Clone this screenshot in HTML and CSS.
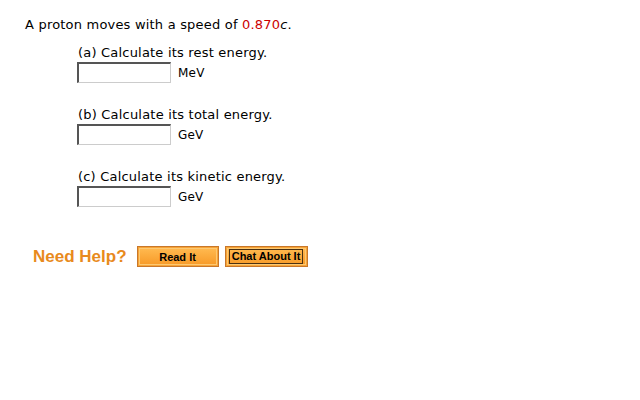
FILE: index.html
```html
<!DOCTYPE html>
<html>
<head>
<meta charset="utf-8">
<link rel="stylesheet" href="styles.css">
</head>
<body>
<div class="page">
  <p class="question">A proton moves with a speed of <span class="val">0.870</span><i>c</i>.</p>
  <div class="parts">
    <div class="part">
      <div class="label">(a) Calculate its rest energy.</div>
      <div class="answer"><span class="box"></span><span class="unit">MeV</span></div>
    </div>
    <div class="part">
      <div class="label">(b) Calculate its total energy.</div>
      <div class="answer"><span class="box"></span><span class="unit">GeV</span></div>
    </div>
    <div class="part">
      <div class="label">(c) Calculate its kinetic energy.</div>
      <div class="answer"><span class="box"></span><span class="unit">GeV</span></div>
    </div>
  </div>
  <div class="help">
    <span class="need">Need Help?</span>
    <span class="btn read"><span class="btn-in">Read It</span></span>
    <span class="btn chat"><span class="btn-in"><span class="focus">Chat About It</span></span></span>
  </div>
</div>
</body>
</html>
```
FILE: styles.css
```css
html, body { margin: 0; padding: 0; background: #fff; }
.page {
  font-family: "DejaVu Sans", Verdana, sans-serif;
  font-size: 13px;
  letter-spacing: 0.2px;
  color: #000;
  padding: 17px 0 0 25px;
}
.question { margin: 0; line-height: 16px; }
.val { color: #cc0000; }
.parts { margin: 12px 0 0 52px; display: flex; flex-direction: column; gap: 24px; }
.label { line-height: 16px; padding-left: 1px; }
.answer { display: flex; align-items: center; margin-top: 1px; }
.box {
  display: block;
  width: 91px; height: 18px;
  border-style: solid; border-width: 2px 1px 1px 2px;
  border-color: #555 #ccc #ccc #555;
  background: #fff;
}
.unit { margin-left: 7px; font-size: 12px; }
.help { display: flex; align-items: center; margin: 39px 0 0 8px; letter-spacing: 0; }
.need {
  font-family: "Liberation Sans", Arial, sans-serif;
  font-weight: bold; font-size: 17px; color: #e88a1d;
  margin-right: 10px;
}
.btn {
  display: flex; box-sizing: border-box;
  height: 21px;
  border: 1px solid #c8772a;
  background: #f7a436;
  padding: 1px;
  margin-right: 6px;
}
.btn-in {
  flex: 1; display: flex; align-items: center; justify-content: center;
  border: 1px solid #fcc873;
  background: linear-gradient(#ffb84e, #f89c2a);
  font-family: "Liberation Sans", Arial, sans-serif;
  font-weight: bold; font-size: 11px; color: #000;
}
.read { width: 82px; }
.chat { width: 83px; }
.focus { border: 1px solid #4a3010; padding: 0 2px; line-height: 13px; }
```
